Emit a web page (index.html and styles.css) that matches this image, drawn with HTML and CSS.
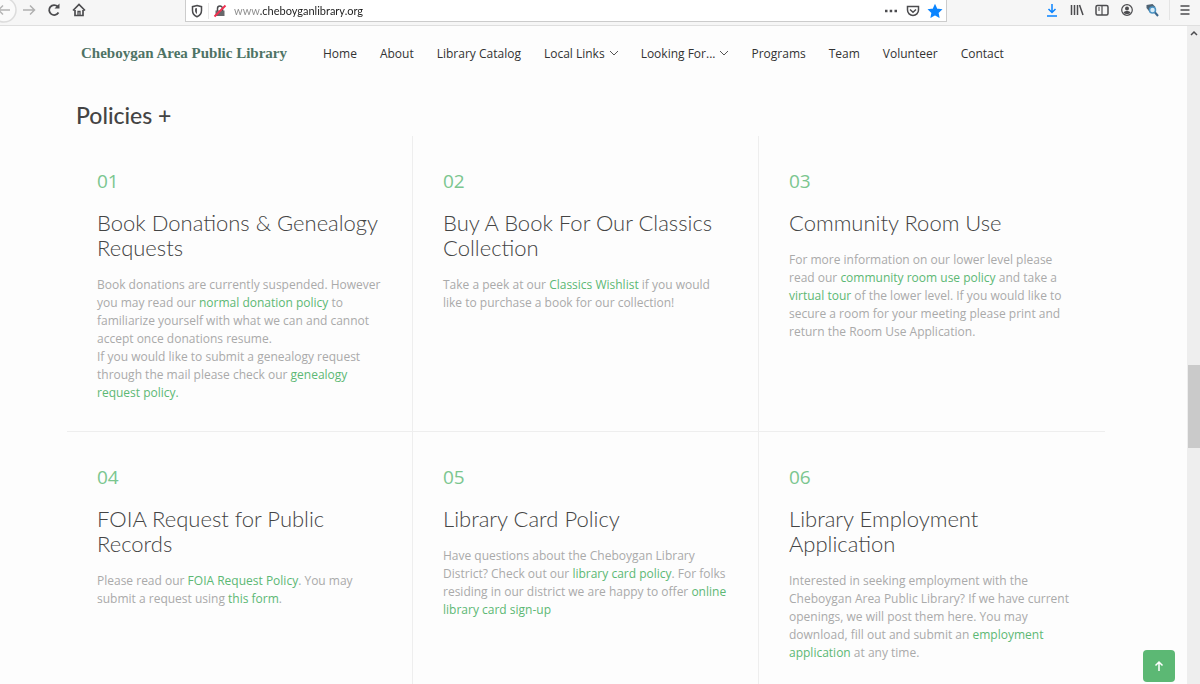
FILE: index.html
```html
<!DOCTYPE html>
<html lang="en">
<head>
  <meta charset="UTF-8">
  <meta name="viewport" content="width=device-width, initial-scale=1.0">
  <title>Cheboygan Area Public Library</title>
  <link rel="stylesheet" href="styles.css">
</head>
<body>
  <!-- browser toolbar -->
  <div class="toolbar">
    <div class="tool-group">
      <button class="tool back" aria-label="Back"><svg width="26" height="26" viewBox="0 0 26 26"><circle cx="13" cy="13" r="12" fill="#fafafa" stroke="#dcdcdc"/><path d="M19 13H8M12 8.500L7.500 13l4.500 4.500" stroke="#b4b4b4"/></svg></button>
      <button class="tool" aria-label="Forward"><svg width="16" height="16" viewBox="0 0 16 16"><path d="M2 8h11M9 3.500L13.500 8 9 12.500" stroke="#b0b0b0"/></svg></button>
      <button class="tool" aria-label="Reload"><svg width="16" height="16" viewBox="0 0 16 16"><path d="M12.500 10.500a5 5 0 1 1-.8-6" stroke-width="1.8"/><path d="M13.500 1.500v5h-5z" fill="#4c4c4f" stroke="none"/></svg></button>
      <button class="tool" aria-label="Home page"><svg width="16" height="16" viewBox="0 0 16 16"><path d="M2 8.500L8 2.500l6 6M4 8v5.500h8V8" stroke-width="1.700"/><path d="M7 13.500V9.500h2v4" stroke-width="1.300"/></svg></button>
    </div>

    <div class="address">
      <div class="site-info">
        <svg width="16" height="16" viewBox="0 0 16 16"><path d="M8 2.500l4.500 1.200v3.800c0 3-1.500 5-4.500 6.200-3-1.200-4.500-3.200-4.500-6.200V3.700z"/><path d="M8 5v6c-1.500-1-2-2-2-3.700V5.500z" fill="#5a5a5d" stroke="none"/></svg>
        <span class="address-line"></span>
        <svg width="16" height="16" viewBox="0 0 16 16"><path d="M3.500 7.500h9V13h-9z" fill="#68686b" stroke="none"/><path d="M5.500 8V5.500a2.500 2.500 0 0 1 5 0V8"/><path d="M2.500 13.500l11-11" stroke="#f03050" stroke-width="2"/></svg>
      </div>
      <input class="url" type="text" aria-label="Address" value="www.cheboyganlibrary.org">
      <button class="tool" aria-label="Page actions"><svg width="16" height="16" viewBox="0 0 16 16"><path d="M2 8h2.500M6.700 8h2.500M11.500 8H14" stroke-width="2.500"/></svg></button>
      <button class="tool" aria-label="Save to Pocket"><svg width="16" height="16" viewBox="0 0 16 16"><path d="M2.500 3.500h11v3.500a5.500 5.500 0 0 1-11 0z"/><path d="M5 6.500L8 9.300l3-2.800"/></svg></button>
      <button class="tool" aria-label="Bookmark"><svg width="16" height="16" viewBox="0 0 16 16"><path d="M8 2.500l1.700 3.800 4.100.5-3 2.800.8 4L8 11.600l-3.600 2 .8-4-3-2.800 4.100-.5z" fill="#0a84ff" stroke="#0a84ff"/></svg></button>
    </div>

    <div class="tool-group end">
      <button class="tool" aria-label="Downloads"><svg width="16" height="16" viewBox="0 0 16 16"><path d="M8 2v8M4.500 7L8 10.500 11.500 7M3 14h10" stroke="#0a84ff"/></svg></button>
      <button class="tool" aria-label="Library"><svg width="16" height="16" viewBox="0 0 16 16"><path d="M2.500 3v10M5.500 3v10M8.500 3v10M10.500 3l3.500 10"/></svg></button>
      <button class="tool" aria-label="Sidebars"><svg width="16" height="16" viewBox="0 0 16 16"><rect x="2" y="3.500" width="12" height="9.500" rx="1.500"/><path d="M8 3.500V13M4 6h2M4 8h2" stroke-width="1.200"/></svg></button>
      <button class="tool" aria-label="Account"><svg width="16" height="16" viewBox="0 0 16 16"><circle cx="8" cy="8" r="5.300" stroke-width="1.200"/><circle cx="8" cy="6.500" r="2" fill="#4c4c4f" stroke="none"/><path d="M4.500 10.500c1-2 6-2 7 0-1.500 2-5.500 2-7 0z" fill="#4c4c4f" stroke="none"/></svg></button>
      <button class="tool" aria-label="Image search"><svg width="16" height="16" viewBox="0 0 16 16"><path d="M2.500 3l6-1 3 3-5 6-4-5z" fill="#4f6272" stroke="none"/><circle cx="8.500" cy="8" r="3" fill="#d8ecf8" stroke="#4b93c4"/><path d="M11 10.500l3 3.500" stroke="#3a668c" stroke-width="2"/></svg></button>
      <button class="tool menu" aria-label="Menu"><svg width="16" height="16" viewBox="0 0 16 16"><path d="M3.500 4h9M3.500 8h9M3.500 12h9"/></svg></button>
    </div>
  </div>

  <div class="window">
    <div class="page">
      <header class="site-header">
        <a class="logo" href="#">Cheboygan Area Public Library</a>
        <nav class="nav">
          <a href="#">Home</a>
          <a href="#">About</a>
          <a href="#">Library Catalog</a>
          <button>Local Links <svg width="8" height="8" viewBox="0 0 8 8"><path d="M0 2l4 4 4-4"/></svg></button>
          <button>Looking For... <svg width="8" height="8" viewBox="0 0 8 8"><path d="M0 2l4 4 4-4"/></svg></button>
          <a href="#">Programs</a>
          <a href="#">Team</a>
          <a href="#">Volunteer</a>
          <a href="#">Contact</a>
        </nav>
      </header>

      <main class="policies">
        <h1>Policies +</h1>
        <div class="grid">
          <section class="policy">
            <span class="number">01</span>
            <h2>Book Donations &amp; Genealogy Requests</h2>
            <p>Book donations are currently suspended. However you may read our <a href="#">normal donation policy</a> to familiarize yourself with what we can and cannot accept once donations resume.<br>If you would like to submit a genealogy request through the mail please check our <a href="#">genealogy request policy.</a></p>
          </section>
          <section class="policy">
            <span class="number">02</span>
            <h2>Buy A Book For Our Classics Collection</h2>
            <p>Take a peek at our <a href="#">Classics Wishlist</a> if you would like to purchase a book for our collection!</p>
          </section>
          <section class="policy">
            <span class="number">03</span>
            <h2>Community Room Use</h2>
            <p>For more information on our lower level please read our <a href="#">community room use policy</a> and take a <a href="#">virtual tour</a> of the lower level. If you would like to secure a room for your meeting please print and return the Room Use Application.</p>
          </section>
          <section class="policy">
            <span class="number">04</span>
            <h2>FOIA Request for Public Records</h2>
            <p>Please read our <a href="#">FOIA Request Policy</a>. You may submit a request using <a href="#">this form</a>.</p>
          </section>
          <section class="policy">
            <span class="number">05</span>
            <h2>Library Card Policy</h2>
            <p>Have questions about the Cheboygan Library District? Check out our <a href="#">library card policy</a>. For folks residing in our district we are happy to offer <a href="#">online library card sign-up</a></p>
          </section>
          <section class="policy">
            <span class="number">06</span>
            <h2>Library Employment Application</h2>
            <p>Interested in seeking employment with the Cheboygan Area Public Library? If we have current openings, we will post them here. You may download, fill out and submit an <a href="#">employment application</a> at any time.</p>
          </section>
        </div>
      </main>
      <button class="to-top" aria-label="Back to top"><svg width="12" height="12" viewBox="0 0 12 12"><path d="M6 11V2M2.500 5.500L6 2l3.500 3.500"/></svg></button>
    </div>

    <div class="scrollbar">
      <svg width="8" height="8" viewBox="0 0 8 8"><path d="M1 6l3-3 3 3"/></svg>
      <div class="thumb"></div>
    </div>
  </div>
</body>
</html>
```
FILE: styles.css
```css
* {
  box-sizing: border-box;
}
body {
  margin: 0;
  height: 100vh;
  display: flex;
  flex-direction: column;
  overflow: hidden;
  background-color: #fdfdfd;
  font-family: "Open Sans", sans-serif;
  font-size: 12px;
  color: #333;
}
button {
  padding: 0;
  border: none;
  background: none;
  font: inherit;
  color: inherit;
  cursor: pointer;
}
a {
  color: #5cb874;
  text-decoration: none;
}
svg {
  display: block;
  flex: none;
  fill: none;
  stroke: #4c4c4f;
  stroke-width: 1.5;
}

/* browser toolbar */
.toolbar {
  flex: none;
  height: 26px;
  display: flex;
  background-color: #f6f6f6;
  border-bottom: 1px solid #dfdfdf;
}
.tool-group {
  height: 20px;
  width: 185px;
  display: flex;
  align-items: center;
  gap: 9px;
}
.back {
  margin: 0 -5px 0 -9px;
}
.address {
  flex: 1;
  height: 22px;
  display: flex;
  align-items: center;
  gap: 6px;
  padding: 0 3px;
  background-color: #fff;
  border: 1px solid #ccc;
  border-top: none;
}
.site-info {
  display: flex;
  align-items: center;
  gap: 3px;
}
.address-line {
  width: 1px;
  height: 16px;
  background-color: #e8e8e8;
}
.url {
  flex: 1;
  min-width: 0;
  padding: 0;
  border: none;
  outline: none;
  font-family: Lato, sans-serif;
  font-size: 11px;
  color: transparent;
  background: linear-gradient(to right, #8a8a8a 26px, #1c1c1c 26px);
  -webkit-background-clip: text;
  background-clip: text;
}
.end {
  width: 253px;
  justify-content: flex-end;
  padding-right: 7px;
}
.menu {
  height: 20px;
  padding-left: 7px;
  border-left: 1px solid #e4e4e4;
}

.window {
  flex: 1;
  min-height: 0;
  display: flex;
}
.page {
  flex: 1;
  position: relative;
  overflow: hidden;
}

/* site header */
.site-header {
  height: 54px;
  display: flex;
  align-items: center;
  gap: 36px;
  padding-left: 81px;
}
.logo {
  font-family: "Liberation Serif", serif;
  font-size: 15px;
  font-weight: bold;
  color: #4e7365;
  white-space: nowrap;
}
.nav {
  display: flex;
  align-items: center;
  gap: 23px;
  white-space: nowrap;
}
.nav a {
  color: #333;
}
.nav button {
  display: flex;
  align-items: center;
  gap: 5px;
}
.nav svg {
  stroke: #555;
  stroke-width: 1;
}

/* policies */
.policies {
  padding: 19px 82px 0 67px;
}
h1 {
  margin: 0 0 5px 9px;
  font-family: Lato, sans-serif;
  font-size: 23px;
  line-height: 32px;
  font-weight: 500;
  color: #444;
}
.grid {
  display: grid;
  grid-template-columns: repeat(3, 1fr);
}
.policy {
  padding: 30px 30px 29px;
  border-right: 1px solid #eee;
  border-bottom: 1px solid #eee;
}
.policy:nth-child(3n) {
  border-right: none;
}
.number {
  display: block;
  margin-bottom: 13px;
  font-size: 19px;
  line-height: 31px;
  color: #7bc68f;
}
h2 {
  margin: 0 0 16px;
  font-family: Lato, sans-serif;
  font-size: 22px;
  line-height: 25px;
  font-weight: 300;
  color: #444;
}
p {
  margin: 0;
  line-height: 18px;
  color: #aaa;
}

.to-top {
  position: absolute;
  right: 12px;
  bottom: 2px;
  width: 32px;
  height: 32px;
  display: flex;
  align-items: center;
  justify-content: center;
  border-radius: 4px;
  background-color: #5cb874;
}
.to-top svg {
  stroke: #fff;
}

.scrollbar {
  width: 13px;
  padding-top: 3px;
  display: flex;
  flex-direction: column;
  align-items: center;
  background-color: #eee;
}
.thumb {
  width: 12px;
  height: 83px;
  margin-top: 328px;
  background-color: #cacaca;
}
```
